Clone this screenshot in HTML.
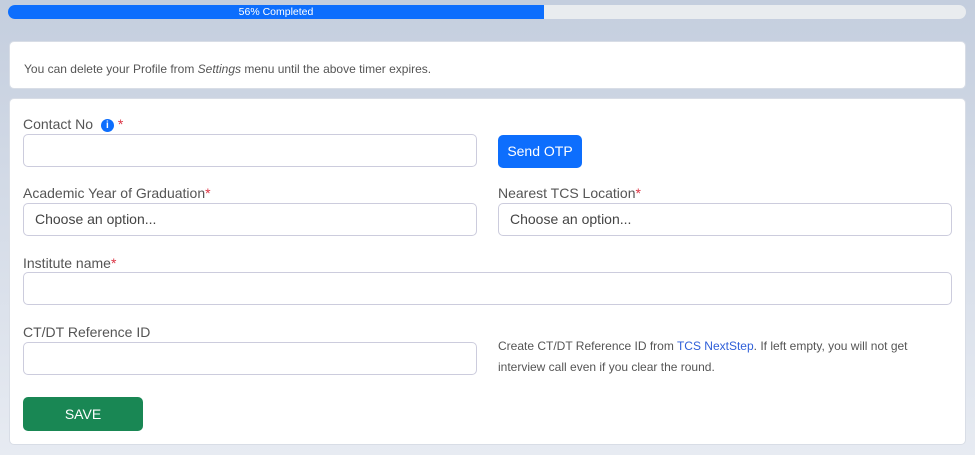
<!DOCTYPE html>
<html><head><style>
body{margin:0;width:975px;height:455px;overflow:hidden;background:linear-gradient(#c4cede,#e7ebf2);font-family:"Liberation Sans",sans-serif;position:relative}
.bar{position:absolute;left:8px;top:5px;width:958px;height:14px;background:#e9ecef;border-radius:7px;overflow:hidden}
.fill{width:536px;height:100%;background:#0d6efd;color:#fff;font-size:10.5px;text-align:center;line-height:14px}
.card{position:absolute;left:9px;width:957px;background:#fff;border-radius:5px;border:1px solid #d8dde6;box-sizing:border-box}
.lbl{position:absolute;font-size:14px;color:#555}
.req{color:#dc3545}
.in{position:absolute;height:33px;border:1px solid #ccd;border-radius:5px;box-sizing:border-box;font-size:14px;color:#444;line-height:31px;padding-left:11px}
.btn{position:absolute;border-radius:5px;color:#fff;font-size:14px;text-align:center}
</style></head><body>
<div class="bar"><div class="fill">56% Completed</div></div>
<div class="card" style="top:41px;height:48px"><div style="position:absolute;left:14px;top:20px;font-size:12px;color:#555">You can delete your Profile from <i>Settings</i> menu until the above timer expires.</div></div>
<div class="card" style="top:98px;height:347px"></div>
<div class="lbl" style="left:23px;top:116px">Contact No <span style="display:inline-block;width:13px;height:13px;border-radius:50%;background:#0d6efd;color:#fff;font-size:10px;font-weight:bold;text-align:center;line-height:13px;vertical-align:1px;margin-left:4px">i</span> <span class="req">*</span></div>
<div class="in" style="left:23px;top:134px;width:454px"></div>
<div class="btn" style="left:498px;top:135px;width:84px;height:33px;line-height:33px;background:#0d6efd">Send OTP</div>
<div class="lbl" style="left:23px;top:185px">Academic Year of Graduation<span class="req">*</span></div>
<div class="in" style="left:23px;top:203px;width:454px">Choose an option...</div>
<div class="lbl" style="left:498px;top:185px">Nearest TCS Location<span class="req">*</span></div>
<div class="in" style="left:498px;top:203px;width:454px">Choose an option...</div>
<div class="lbl" style="left:23px;top:255px">Institute name<span class="req">*</span></div>
<div class="in" style="left:23px;top:272px;width:929px"></div>
<div class="lbl" style="left:23px;top:324px">CT/DT Reference ID</div>
<div class="in" style="left:23px;top:342px;width:454px"></div>
<div style="position:absolute;left:498px;top:336px;width:440px;font-size:12px;color:#555;line-height:21px">Create CT/DT Reference ID from <span style="color:#2f5fd8">TCS NextStep</span>. If left empty, you will not get interview call even if you clear the round.</div>
<div class="btn" style="left:23px;top:397px;width:120px;height:34px;line-height:34px;background:#198754">SAVE</div>
</body></html>
